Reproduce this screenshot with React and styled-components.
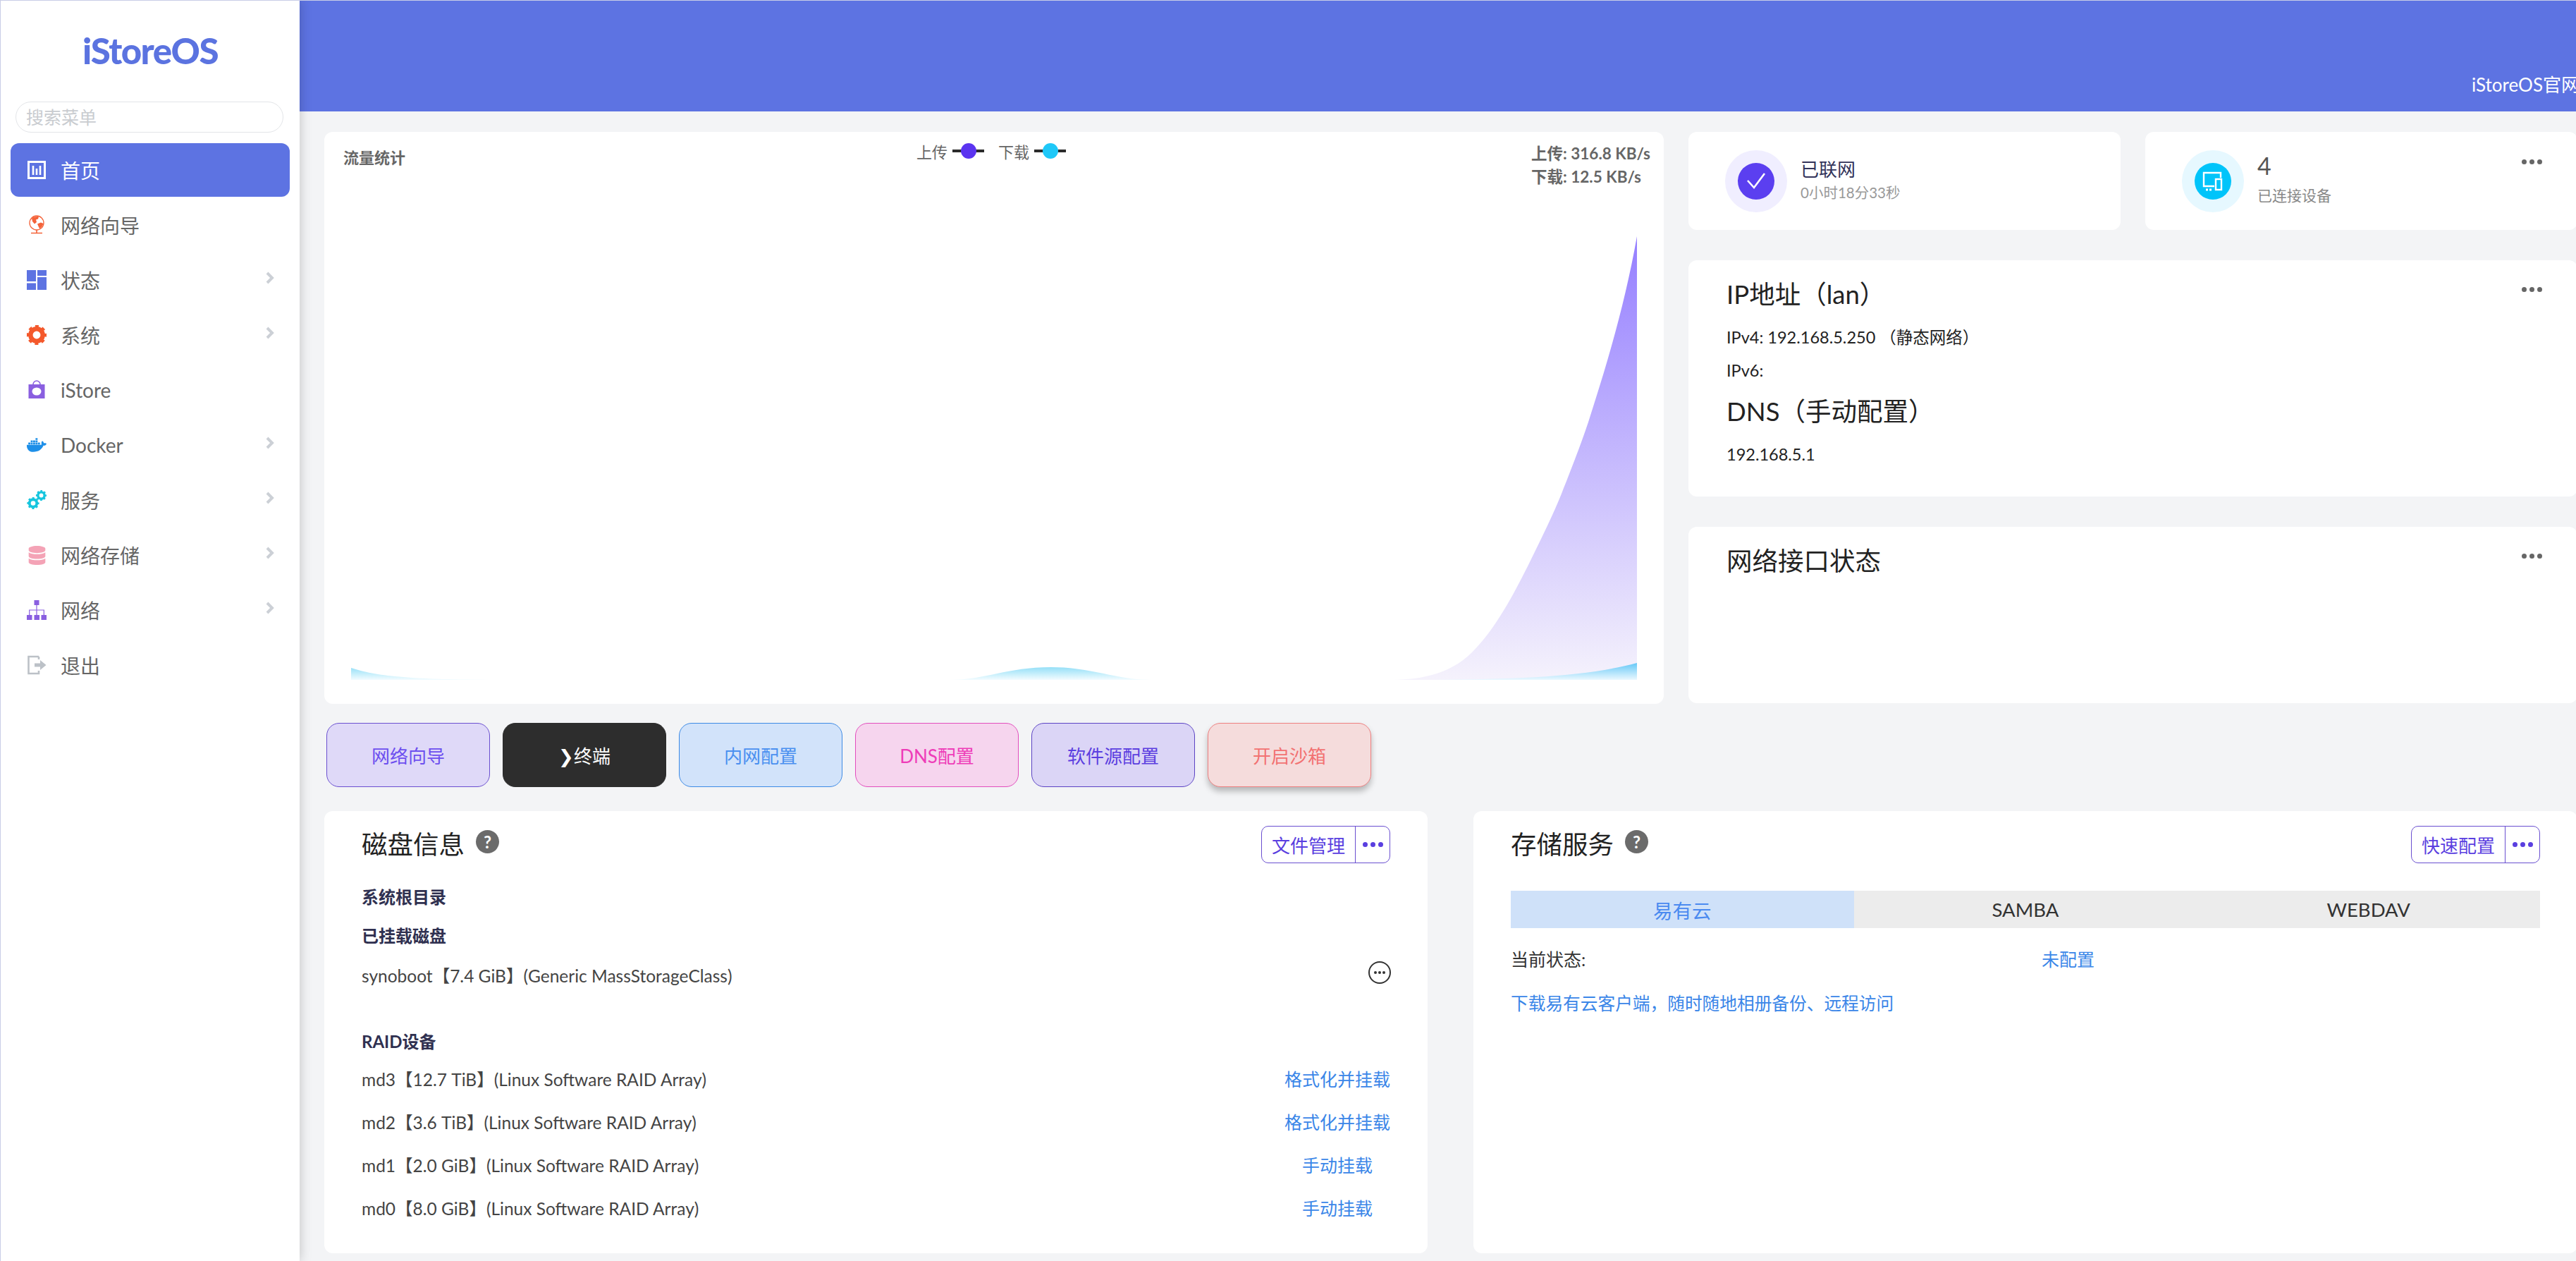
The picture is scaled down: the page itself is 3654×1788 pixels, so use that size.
import React from 'react';
import styled, { createGlobalStyle } from 'styled-components';
import { FaDocker, FaDatabase } from 'react-icons/fa';

const GlobalStyle = createGlobalStyle`
  html, body {
    margin: 0;
    padding: 0;
    background: #f3f4f6;
    overflow: hidden;
  }
  * { box-sizing: border-box; }
  body {
    font-family: Lato, "Noto Sans CJK SC", sans-serif;
  }
`;

const Shell = styled.div`
  display: flex;
  width: 3654px;
  height: 1788px;
  overflow: hidden;
  background: #f3f4f6;
  border-top: 1px solid #c9cde6;
  border-left: 1px solid #c9cde6;
`;

/* sidebar */
const Sidebar = styled.aside`
  flex: 0 0 424px;
  background: #fff;
  box-shadow: 0 0 16px rgba(0, 0, 0, 0.22);
  position: relative;
  z-index: 2;
`;
const Logo = styled.div`
  height: 143px;
  display: flex;
  align-items: center;
  justify-content: center;
  padding-bottom: 2px;
  font-size: 51px;
  font-weight: 900;
  letter-spacing: -1.5px;
  color: #5b73e0;
`;
const Search = styled.input`
  display: block;
  width: 380px;
  height: 44px;
  margin-left: 21px;
  padding: 0 14px;
  border: 1px solid #e3e5e8;
  border-radius: 22px;
  outline: none;
  background: #fff;
  font: 400 25px Lato, "Noto Sans CJK SC", sans-serif;
  &::placeholder { color: #c9ccd0; }
`;
const Nav = styled.nav`
  display: flex;
  flex-direction: column;
  gap: 2px;
  margin: 15px 14px 0;
`;
const NavItem = styled.a`
  display: flex;
  align-items: center;
  height: 76px;
  padding: 0 22px 0 23px;
  border-radius: 12px;
  background: ${p => (p.$active ? '#5d73e2' : 'transparent')};
  color: ${p => (p.$active ? '#fff' : '#666')};
  font-size: 28px;
`;
const NavIcon = styled.span`
  flex: 0 0 28px;
  height: 28px;
  margin-right: 20px;
  display: flex;
  align-items: center;
  justify-content: center;
  color: ${p => p.$color || 'inherit'};
`;
const NavLabel = styled.span`
  flex: 1;
`;
const Chevron = styled.svg`
  width: 12px;
  height: 18px;
  margin-bottom: 6px;
`;

/* main */
const Main = styled.main`
  flex: 1;
  min-width: 0;
`;
const Header = styled.header`
  height: 157px;
  background: #5d73e2;
  display: flex;
  justify-content: flex-end;
  align-items: flex-end;
  padding-bottom: 21px;
  overflow: hidden;
`;
const HeaderLink = styled.a`
  flex: none;
  margin-right: -5px;
  color: #fff;
  font-size: 26px;
  line-height: 34px;
`;
const Content = styled.div`
  width: 3231px;
  padding: 29px 0 0 35px;
`;
const TopGrid = styled.div`
  display: grid;
  grid-template-columns: 1900px 1261px;
  column-gap: 35px;
  height: 811px;
`;
const Card = styled.section`
  background: #fff;
  border-radius: 12px;
`;

/* traffic chart */
const ChartCard = styled(Card)`
  padding-top: 14px;
`;
const ChartHead = styled.div`
  display: grid;
  grid-template-columns: 1fr auto 1fr;
  height: 134px;
  padding: 0 18px 0 27px;
  font-size: 22px;
  color: #666;
`;
const ChartTitle = styled.div`
  margin-top: 6px;
  font-weight: 700;
  line-height: 33px;
`;
const Legend = styled.div`
  display: flex;
  align-items: center;
  align-self: flex-start;
  height: 26px;
  margin-left: 3px;
`;
const LegendMark = styled.span`
  position: relative;
  width: 45px;
  height: 4px;
  margin: 0 20px 0 7px;
  background: #2b2b2b;
  &::after {
    content: '';
    position: absolute;
    left: 12px;
    top: -9px;
    width: 22px;
    height: 22px;
    border-radius: 50%;
    background: ${p => p.$color};
  }
`;
const ChartStats = styled.div`
  justify-self: end;
  font-size: 22.5px;
  font-weight: 700;
  line-height: 33px;
  width: 170px;
  white-space: nowrap;
`;
const ChartSvg = styled.svg`
  display: block;
  width: 1824px;
  height: 630px;
  margin-left: 38px;
`;

/* right column */
const RightColumn = styled.div`
  display: flex;
  flex-direction: column;
  gap: 43px;
`;
const StatusRow = styled.div`
  display: grid;
  grid-template-columns: 1fr 1fr;
  column-gap: 35px;
  height: 139px;
`;
const StatusCard = styled(Card)`
  display: flex;
  align-items: center;
  padding: 0 50px 0 52px;
`;
const Halo = styled.div`
  flex: 0 0 88px;
  height: 88px;
  margin-right: 19px;
  border-radius: 50%;
  background: ${p => p.$bg};
  display: flex;
  align-items: center;
  justify-content: center;
`;
const Badge = styled.div`
  width: 52px;
  height: 52px;
  border-radius: 50%;
  background: ${p => p.$bg};
  display: flex;
  align-items: center;
  justify-content: center;
`;
const StatusText = styled.div`
  flex: 1;
`;
const StatusTitle = styled.div`
  font-size: 26px;
  line-height: 33px;
  color: #33345a;
`;
const StatusSub = styled.div`
  font-size: 20.5px;
  line-height: 33px;
  color: #999;
`;
const StatusCount = styled.div`
  font-size: 34px;
  line-height: 40px;
  color: #555;
`;
const StatusCountSub = styled.div`
  font-size: 21px;
  line-height: 44px;
  color: #888;
`;
const Dots = styled.span`
  flex: none;
  align-self: flex-start;
  display: flex;
  gap: 4px;
  margin-top: 39px;
  span {
    width: 7px;
    height: 7px;
    border-radius: 50%;
    background: ${p => p.$color || '#666'};
  }
`;
const InfoCard = styled(Card)`
  display: flex;
  justify-content: space-between;
  padding: 14px 50px 0 54px;
  height: ${p => p.$height}px;
  ${Dots} {
    margin-top: 24px;
  }
`;
const InfoTitle = styled.h2`
  margin: 8px 0 12px;
  font-size: 36.5px;
  font-weight: 400;
  line-height: 52px;
  color: #222;
`;
const InfoLine = styled.div`
  font-size: 23.5px;
  line-height: 47px;
  color: #222;
`;

/* quick actions */
const Actions = styled.div`
  display: flex;
  gap: 18px;
  margin: 27px 0 34px 3px;
`;
const tones = {
  violet: ['#dfd9f8', '#6a4fd0', '#6d4fef'],
  dark: ['#2d2d2d', '#2d2d2d', '#fff'],
  blue: ['#d2e3fa', '#3d8ae5', '#4a90f0'],
  pink: ['#f6d5ee', '#e24dbd', '#ee3cb8'],
  indigo: ['#dbd5f6', '#5b43c4', '#5b3fe0'],
  red: ['#f5dcdc', '#ee8080', '#f27272'],
};
const ActionButton = styled.button`
  width: 232px;
  height: 91px;
  border-radius: 18px;
  border: 1.5px solid ${p => tones[p.$tone][1]};
  background: ${p => tones[p.$tone][0]};
  color: ${p => tones[p.$tone][2]};
  box-shadow: ${p => (p.$raised ? '0 6px 8px rgba(0,0,0,.25)' : 'none')};
  font: 400 26px Lato, "Noto Sans CJK SC", "DejaVu Sans", sans-serif;
`;

/* bottom cards */
const BottomGrid = styled.div`
  display: grid;
  grid-template-columns: 1565px 1566px;
  column-gap: 65px;
  height: 627px;
`;
const PanelCard = styled(Card)`
  padding: 21px 53px 0;
`;
const PanelHead = styled.div`
  display: flex;
  align-items: center;
  height: 53px;
`;
const PanelTitle = styled.h2`
  margin: 0 10px 4px 0;
  font-size: 36.5px;
  font-weight: 400;
  color: #222;
`;
const Help = styled.span`
  width: 33px;
  height: 33px;
  margin: 0 0 8px 6px;
  border-radius: 50%;
  background: #6b6b6b;
  color: #fff;
  font-size: 24px;
  font-weight: 700;
  line-height: 33px;
  text-align: center;
`;
const ButtonGroup = styled.div`
  display: flex;
  margin-left: auto;
  height: 53px;
  border: 1.5px solid #6a4fd0;
  border-radius: 10px;
  color: #5a3fe0;
  font-size: 26px;
`;
const GroupLabel = styled.span`
  display: flex;
  align-items: center;
  padding: 0 14px;
  border-right: 1px solid #6a4fd0;
`;
const GroupMore = styled.span`
  display: flex;
  align-items: center;
  justify-content: center;
  width: 48px;
  ${Dots} {
    margin: 0;
    align-self: center;
  }
`;
const SectionLabel = styled.div`
  display: flex;
  align-items: center;
  height: 55px;
  font-size: 24px;
  font-weight: 700;
  color: #2f3050;
`;
const RootLabel = styled(SectionLabel)`
  margin-top: 19px;
`;
const RaidLabel = styled(SectionLabel)`
  height: 49px;
  margin-top: 37px;
`;
const DiskRow = styled.div`
  display: flex;
  align-items: center;
  justify-content: space-between;
  height: 61px;
  padding-bottom: 3px;
  font-size: 24.5px;
  color: #444;
`;
const RowAction = styled.a`
  flex: 0 0 150px;
  text-align: center;
  font-size: 25px;
  color: #3a86e8;
`;
const MoreCircle = styled.span`
  width: 32px;
  height: 32px;
  margin: 0 -1px 6px 0;
  border: 2px solid #333;
  border-radius: 50%;
  display: flex;
  align-items: center;
  justify-content: center;
  gap: 2px;
  span {
    width: 4px;
    height: 4px;
    border-radius: 50%;
    background: #333;
  }
`;
const Tabs = styled.div`
  display: grid;
  grid-template-columns: repeat(3, 1fr);
  height: 53px;
  margin-top: 39px;
  background: #ececec;
`;
const Tab = styled.div`
  display: flex;
  align-items: center;
  justify-content: center;
  background: ${p => (p.$active ? '#cfe1f9' : 'transparent')};
  color: ${p => (p.$active ? '#4a8af0' : '#333')};
  font-size: 27.5px;
`;
const StateRow = styled.div`
  display: grid;
  grid-template-columns: 753px 1fr;
  align-items: center;
  height: 50px;
  margin-top: 18px;
  font-size: 25px;
  color: #333;
`;
const StateValue = styled.span`
  color: #3a86e8;
`;
const StorageLink = styled.a`
  display: block;
  margin-top: 14px;
  font-size: 24.7px;
  line-height: 50px;
  color: #3a86e8;
`;

const Gear = ({ cx, cy, r, color }) => {
  const outer = r * 0.88;
  const dash = (2 * Math.PI * outer) / 16;
  return (
    <g fill="none" stroke={color}>
      <circle cx={cx} cy={cy} r={r * 0.62} strokeWidth={r * 0.46} />
      <circle cx={cx} cy={cy} r={outer} strokeWidth={r * 0.26} strokeDasharray={`${dash} ${dash}`} strokeDashoffset={dash / 2} />
    </g>
  );
};

const HomeIcon = () => (
  <svg width="26" height="26" viewBox="0 0 26 26" fill="none" stroke="#fff">
    <rect x="1.5" y="1.5" width="23" height="23" strokeWidth="3" />
    <path d="M8 7v13M13 11v9M18 7v13" strokeWidth="2.6" />
  </svg>
);
const GlobeIcon = () => (
  <svg width="28" height="28" viewBox="0 0 28 28">
    <circle cx="14" cy="11" r="10" fill="none" stroke="#f4633a" strokeWidth="1.3" />
    <path d="M7 4.500c3-2.500 8-3 10-2l-1 3-3 1 1 3.500-3 2.500-3-3.500zM15 12.500l5-2 3.500 1.500c-.8 3.200-3 6.200-5.500 7l-1.500-3z" fill="#f4633a" />
    <path d="M14 21v4M6 25.500h16" stroke="#f4633a" strokeWidth="1.6" />
  </svg>
);
const StatusIcon = () => (
  <svg width="28" height="28" viewBox="0 0 28 28" fill="#5d73e2">
    <rect x="0" y="0" width="13" height="16" />
    <rect x="15" y="0" width="13" height="8" />
    <rect x="0" y="18.500" width="13" height="9.500" />
    <rect x="15" y="10" width="13" height="18" />
  </svg>
);
const SystemIcon = () => (
  <svg width="28" height="28" viewBox="0 0 28 28">
    <Gear cx={14} cy={14} r={14} color="#f4592c" />
  </svg>
);
const StoreIcon = () => (
  <svg width="28" height="28" viewBox="0 0 28 28">
    <path d="M9 9V6a5 5 0 0 1 10 0v3" fill="none" stroke="#8a5fe0" strokeWidth="1.6" />
    <rect x="2.500" y="6" width="23" height="20" fill="#8a5fe0" />
    <ellipse cx="14" cy="16" rx="6.500" ry="5.500" fill="#fff" />
  </svg>
);
const ServiceIcon = () => (
  <svg width="28" height="28" viewBox="0 0 28 28">
    <Gear cx={9} cy={18.5} r={8.5} color="#16c5de" />
    <Gear cx={20.5} cy={7.5} r={7.5} color="#16c5de" />
  </svg>
);
const NetworkIcon = () => (
  <svg width="28" height="28" viewBox="0 0 28 28" fill="#8a5fe0">
    <rect x="10.500" y="0" width="7" height="7" />
    <rect x="0" y="21" width="7.500" height="7" />
    <rect x="10.500" y="21" width="7.500" height="7" />
    <rect x="20.500" y="21" width="7.500" height="7" />
    <path d="M14 7v14M3.700 21v-7h20.600v7" fill="none" stroke="#8a5fe0" strokeWidth="1.2" />
  </svg>
);
const LogoutIcon = () => (
  <svg width="28" height="28" viewBox="0 0 28 28">
    <path d="M17 2H2.500v24H17v-4M17 2v4" fill="none" stroke="#bcc1c7" strokeWidth="2.6" />
    <path d="M11 11.500h8V7l8.500 7-8.500 7v-4.500h-8z" fill="#bcc1c7" />
  </svg>
);
const CheckIcon = () => (
  <svg width="52" height="52" viewBox="0 0 52 52" fill="none" stroke="#fff" strokeWidth="2.6">
    <path d="M14 25l9 10 15-20" />
  </svg>
);
const DevicesIcon = () => (
  <svg width="34" height="34" viewBox="0 0 34 34" fill="none" stroke="#fff" strokeWidth="2.4">
    <path d="M19 24H4V5h24v7" />
    <path d="M7 29h10" strokeWidth="3" strokeDasharray="3 2" />
    <rect x="21" y="14" width="8" height="15" />
  </svg>
);

const MoreDots = ({ color }) => (
  <Dots $color={color}>
    <span />
    <span />
    <span />
  </Dots>
);

const navItems = [
  { label: '首页', icon: <HomeIcon />, active: true },
  { label: '网络向导', icon: <GlobeIcon /> },
  { label: '状态', icon: <StatusIcon />, more: true },
  { label: '系统', icon: <SystemIcon />, more: true },
  { label: 'iStore', icon: <StoreIcon /> },
  { label: 'Docker', icon: <FaDocker size={28} />, color: '#1d8fe8', more: true },
  { label: '服务', icon: <ServiceIcon />, more: true },
  { label: '网络存储', icon: <FaDatabase size={27} />, color: '#f4a3b6', more: true },
  { label: '网络', icon: <NetworkIcon />, more: true },
  { label: '退出', icon: <LogoutIcon /> },
];

const actions = [
  { label: '网络向导', tone: 'violet' },
  { label: '❯终端', tone: 'dark' },
  { label: '内网配置', tone: 'blue' },
  { label: 'DNS配置', tone: 'pink' },
  { label: '软件源配置', tone: 'indigo' },
  { label: '开启沙箱', tone: 'red', raised: true },
];

const raidDisks = [
  { name: 'md3【12.7 TiB】(Linux Software RAID Array)', action: '格式化并挂载' },
  { name: 'md2【3.6 TiB】(Linux Software RAID Array)', action: '格式化并挂载' },
  { name: 'md1【2.0 GiB】(Linux Software RAID Array)', action: '手动挂载' },
  { name: 'md0【8.0 GiB】(Linux Software RAID Array)', action: '手动挂载' },
];

function TrafficChart() {
  return (
    <ChartSvg viewBox="0 0 1824 630">
      <defs>
        <linearGradient id="up" gradientUnits="userSpaceOnUse" x1="0" y1="0" x2="0" y2="629">
          <stop offset="0" stopColor="#957fff" />
          <stop offset="1" stopColor="#f5f2fc" />
        </linearGradient>
        <linearGradient id="down" gradientUnits="userSpaceOnUse" x1="0" y1="603" x2="0" y2="629">
          <stop offset="0" stopColor="#5bc4f6" />
          <stop offset="1" stopColor="#eaf8ff" />
        </linearGradient>
        <linearGradient id="downSoft" gradientUnits="userSpaceOnUse" x1="0" y1="610" x2="0" y2="629">
          <stop offset="0" stopColor="#90def7" />
          <stop offset="1" stopColor="#f2fcff" />
        </linearGradient>
      </defs>
      <path
        d="M1480 629C1520 628 1560 620 1590 590C1625 555 1650 505 1669 468C1690 425 1705 395 1717 365C1735 320 1750 280 1758 254C1785 170 1808 90 1824 0L1824 629Z"
        fill="url(#up)"
      />
      <path d="M0 612C40 625 90 629 230 629L0 629Z" fill="url(#downSoft)" />
      <path d="M850 629C900 629 930 611 993 611C1050 611 1085 629 1136 629Z" fill="url(#downSoft)" />
      <path d="M1497 629C1650 629 1750 625 1824 605L1824 629Z" fill="url(#down)" />
    </ChartSvg>
  );
}

export default function App() {
  return (
    <Shell>
      <GlobalStyle />
      <Sidebar>
        <Logo>iStoreOS</Logo>
        <Search placeholder="搜索菜单" />
        <Nav>
          {navItems.map(item => (
            <NavItem key={item.label} $active={item.active}>
              <NavIcon $color={item.color}>{item.icon}</NavIcon>
              <NavLabel>{item.label}</NavLabel>
              {item.more && (
                <Chevron viewBox="0 0 12 18" fill="none" stroke="#ccd0d6" strokeWidth="4">
                  <path d="M2 2l7 7-7 7" />
                </Chevron>
              )}
            </NavItem>
          ))}
        </Nav>
      </Sidebar>
      <Main>
        <Header>
          <HeaderLink>iStoreOS官网</HeaderLink>
        </Header>
        <Content>
          <TopGrid>
            <ChartCard>
              <ChartHead>
                <ChartTitle>流量统计</ChartTitle>
                <Legend>
                  上传<LegendMark $color="#5b34f0" />
                  下载<LegendMark $color="#1fc8f8" />
                </Legend>
                <ChartStats>
                  上传: 316.8 KB/s
                  <br />
                  下载: 12.5 KB/s
                </ChartStats>
              </ChartHead>
              <TrafficChart />
            </ChartCard>
            <RightColumn>
              <StatusRow>
                <StatusCard>
                  <Halo $bg="#f0eeff">
                    <Badge $bg="#5b3ff0">
                      <CheckIcon />
                    </Badge>
                  </Halo>
                  <StatusText>
                    <StatusTitle>已联网</StatusTitle>
                    <StatusSub>0小时18分33秒</StatusSub>
                  </StatusText>
                </StatusCard>
                <StatusCard>
                  <Halo $bg="#e6f8ff">
                    <Badge $bg="#00c4fa">
                      <DevicesIcon />
                    </Badge>
                  </Halo>
                  <StatusText>
                    <StatusCount>4</StatusCount>
                    <StatusCountSub>已连接设备</StatusCountSub>
                  </StatusText>
                  <MoreDots />
                </StatusCard>
              </StatusRow>
              <InfoCard $height={335}>
                <div>
                  <InfoTitle>IP地址（lan）</InfoTitle>
                  <InfoLine>IPv4: 192.168.5.250 （静态网络）</InfoLine>
                  <InfoLine>IPv6:</InfoLine>
                  <InfoTitle>DNS（手动配置）</InfoTitle>
                  <InfoLine>192.168.5.1</InfoLine>
                </div>
                <MoreDots />
              </InfoCard>
              <InfoCard $height={250}>
                <InfoTitle>网络接口状态</InfoTitle>
                <MoreDots />
              </InfoCard>
            </RightColumn>
          </TopGrid>

          <Actions>
            {actions.map(a => (
              <ActionButton key={a.label} $tone={a.tone} $raised={a.raised}>
                {a.label}
              </ActionButton>
            ))}
          </Actions>

          <BottomGrid>
            <PanelCard>
              <PanelHead>
                <PanelTitle>磁盘信息</PanelTitle>
                <Help>?</Help>
                <ButtonGroup>
                  <GroupLabel>文件管理</GroupLabel>
                  <GroupMore>
                    <MoreDots color="#5a3fe0" />
                  </GroupMore>
                </ButtonGroup>
              </PanelHead>
              <RootLabel>系统根目录</RootLabel>
              <SectionLabel>已挂载磁盘</SectionLabel>
              <DiskRow>
                synoboot【7.4 GiB】(Generic MassStorageClass)
                <MoreCircle>
                  <span />
                  <span />
                  <span />
                </MoreCircle>
              </DiskRow>
              <RaidLabel>RAID设备</RaidLabel>
              {raidDisks.map(d => (
                <DiskRow key={d.name}>
                  {d.name}
                  <RowAction>{d.action}</RowAction>
                </DiskRow>
              ))}
            </PanelCard>
            <PanelCard>
              <PanelHead>
                <PanelTitle>存储服务</PanelTitle>
                <Help>?</Help>
                <ButtonGroup>
                  <GroupLabel>快速配置</GroupLabel>
                  <GroupMore>
                    <MoreDots color="#5a3fe0" />
                  </GroupMore>
                </ButtonGroup>
              </PanelHead>
              <Tabs>
                <Tab $active>易有云</Tab>
                <Tab>SAMBA</Tab>
                <Tab>WEBDAV</Tab>
              </Tabs>
              <StateRow>
                当前状态:
                <StateValue>未配置</StateValue>
              </StateRow>
              <StorageLink>下载易有云客户端，随时随地相册备份、远程访问</StorageLink>
            </PanelCard>
          </BottomGrid>
        </Content>
      </Main>
    </Shell>
  );
}
